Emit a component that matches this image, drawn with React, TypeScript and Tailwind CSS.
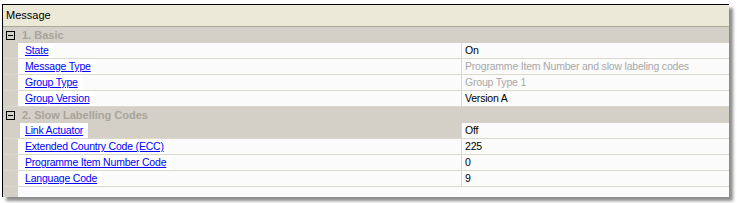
type Row = { label: string; value: string; muted?: boolean; selected?: boolean };

const groups: { title: string; rows: Row[] }[] = [
  {
    title: '1. Basic',
    rows: [
      { label: 'State', value: 'On' },
      { label: 'Message Type', value: 'Programme Item Number and slow labeling codes', muted: true },
      { label: 'Group Type', value: 'Group Type 1', muted: true },
      { label: 'Group Version', value: 'Version A' },
    ],
  },
  {
    title: '2. Slow Labelling Codes',
    rows: [
      { label: 'Link Actuator', value: 'Off', selected: true },
      { label: 'Extended Country Code (ECC)', value: '225' },
      { label: 'Programme Item Number Code', value: '0' },
      { label: 'Language Code', value: '9' },
    ],
  },
];

function Toggle() {
  return (
    <div className="flex h-[9px] w-[9px] items-center justify-center border border-black bg-[#d4d0c8]">
      <div className="h-px w-[5px] bg-black" />
    </div>
  );
}

function PropertyRow({ row }: { row: Row }) {
  return (
    <div className="flex h-[16px] border-b border-[#dcd9cc]">
      <div className="w-[15px] bg-[#d4d0c8]" />
      <div className={`flex w-[443px] items-center pl-[2px] ${row.selected ? 'bg-[#d4d0c8]' : 'bg-[#fbfbfb]'}`}>
        <a className="bg-white px-[5px] leading-[15px] text-[#0000ff] underline">{row.label}</a>
      </div>
      <div
        className={`flex flex-1 items-center border-l border-[#dcd9cc] bg-[#fbfbfb] pl-[3px] ${
          row.muted ? 'text-[#a8a8a8]' : 'text-black'
        }`}
      >
        {row.value}
      </div>
    </div>
  );
}

export default function App() {
  return (
    <div className="h-[203px] w-[737px] bg-white pl-[2px] pt-[4px] font-['Liberation_Sans',Arial,sans-serif] text-[10.5px] tracking-[-0.2px]">
      <div className="flex h-[193px] w-[727px] flex-col border-l border-t border-black bg-[#fbfbfb] shadow-[4px_4px_3px_rgba(0,0,0,0.45)]">
        {/* Header */}
        <div className="flex h-[22px] items-center border-b border-[#aca899] bg-[#ece9d8] pl-[3px] text-[11px] tracking-normal text-black">
          Message
        </div>

        {groups.map((g) => (
          <div key={g.title} className="flex flex-col">
            <div className="flex h-[16px] items-center bg-[#d4d0c8]">
              <div className="flex w-[19px] items-center pl-[3px]">
                <Toggle />
              </div>
              <span className="text-[11px] font-bold tracking-normal text-[#a8a49a]">{g.title}</span>
            </div>
            {g.rows.map((r) => (
              <PropertyRow key={r.label} row={r} />
            ))}
          </div>
        ))}

        {/* Empty area below the grid */}
        <div className="flex flex-1">
          <div className="w-[15px] bg-[#d4d0c8]" />
          <div className="flex-1" />
        </div>
      </div>
    </div>
  );
}
